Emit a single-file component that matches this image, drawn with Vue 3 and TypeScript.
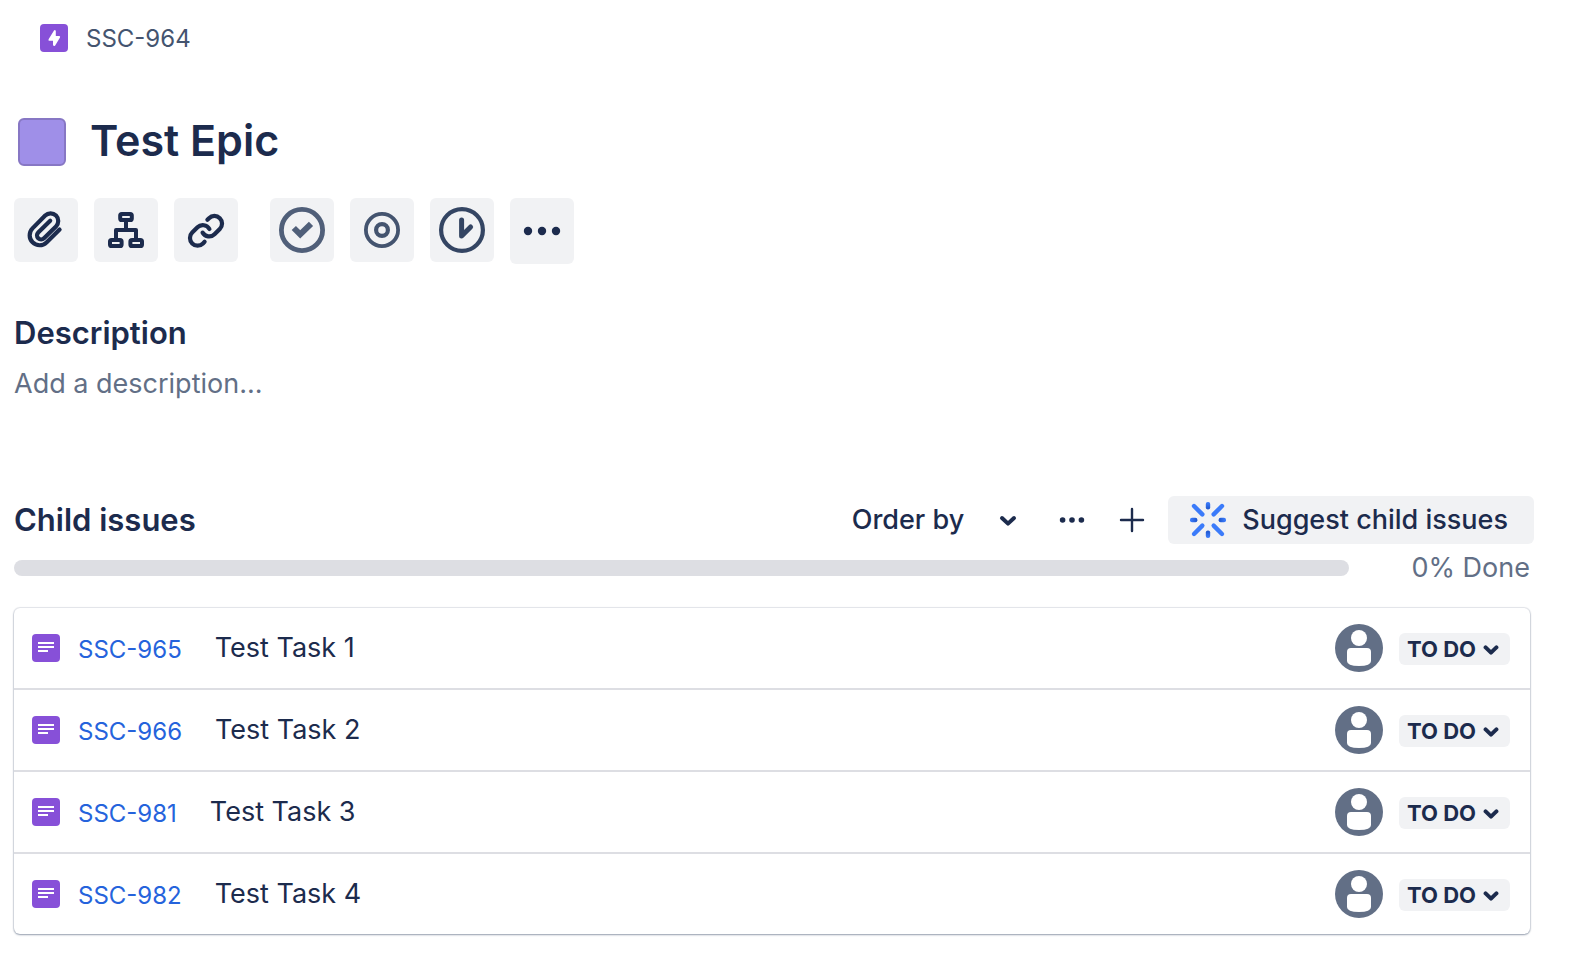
<script setup lang="ts">
interface ChildIssue {
  key: string
  summary: string
}

const issues: ChildIssue[] = [
  { key: 'SSC-965', summary: 'Test Task 1' },
  { key: 'SSC-966', summary: 'Test Task 2' },
  { key: 'SSC-981', summary: 'Test Task 3' },
  { key: 'SSC-982', summary: 'Test Task 4' },
]

const percentDone = 0
const diagonals = [45, 135, 225, 315]
const rays = [0, 90, 180, 270]
</script>

<template>
  <main class="issue">
    <nav class="crumb" aria-label="Breadcrumb">
      <svg class="type-icon" viewBox="0 0 28 28" aria-hidden="true">
        <rect width="28" height="28" rx="4" fill="#8750d8" />
        <path d="M14 6.4 8.6 15.2Q8 16.8 9.4 16.8H13V21Q13.8 22.8 15.2 21.4L20 13.6Q20.6 12 19.2 12H15.8V7Q15.2 5.4 14 6.4Z" fill="#fff" />
      </svg>
      <a class="crumb-key" href="#">SSC-964</a>
    </nav>

    <header class="title-row">
      <button class="swatch" type="button" aria-label="Epic color"></button>
      <h1>Test Epic</h1>
    </header>

    <div class="toolbar">
      <div class="tool-group">
        <button class="tool" type="button" aria-label="Attach">
          <svg viewBox="0 0 64 64" fill="none" stroke="#1c2b4d" stroke-width="4.2" stroke-linecap="round">
            <path d="M45.6 31.6 32.5 44.4A9.9 9.9 0 0 1 18.5 30.4L31.2 17.6A7.6 7.6 0 0 1 42 28.4L30 40.2A4.1 4.1 0 0 1 24.2 34.4L36.2 22.8" />
          </svg>
        </button>
        <button class="tool" type="button" aria-label="Add a child issue">
          <svg viewBox="0 0 64 64" fill="none" stroke="#1c2b4d" stroke-width="4" stroke-linejoin="round">
            <rect x="26.2" y="16" width="11.6" height="6" rx="1.6" />
            <rect x="16" y="42" width="11.6" height="6" rx="1.6" />
            <rect x="36.4" y="42" width="11.6" height="6" rx="1.6" />
            <path d="M32 23V32M22 41V32H42V41" />
          </svg>
        </button>
        <button class="tool" type="button" aria-label="Link issue">
          <svg viewBox="0 0 64 64" fill="none" stroke="#1c2b4d" stroke-width="4.2" stroke-linecap="round">
            <path d="M33.4 21.8 35 20.2A7.6 7.6 0 0 1 45.8 31L40.5 36.3A7.6 7.6 0 0 1 28.6 34.6" />
            <path d="M30.6 43.8 29 45.4A7.6 7.6 0 0 1 18.2 34.6L23.5 29.3A7.6 7.6 0 0 1 35.4 31" />
          </svg>
        </button>
      </div>
      <div class="tool-group">
        <button class="tool" type="button" aria-label="Add checklist">
          <svg viewBox="0 0 64 64" fill="none" stroke="#505f79">
            <circle cx="32" cy="32" r="20.6" stroke-width="4.8" />
            <path d="M23.8 30 30.2 36.4 41 25.8" stroke-width="6" />
          </svg>
        </button>
        <button class="tool" type="button" aria-label="Add goal">
          <svg viewBox="0 0 64 64" fill="none" stroke="#44546f">
            <circle cx="32" cy="32" r="16.1" stroke-width="3.8" />
            <circle cx="32" cy="32" r="5.9" stroke-width="4.2" />
          </svg>
        </button>
        <button class="tool" type="button" aria-label="Log time">
          <svg viewBox="0 0 64 64" fill="none" stroke="#344563">
            <circle cx="32" cy="32" r="20.9" stroke-width="4.2" />
            <path d="M31.6 22V38L40.6 29" stroke-width="5" stroke-linecap="round" stroke-linejoin="round" />
          </svg>
        </button>
        <button class="tool tool-more" type="button" aria-label="More actions">
          <svg viewBox="0 0 64 64" fill="#1c2b4d">
            <circle cx="18" cy="32" r="4.2" />
            <circle cx="32" cy="32" r="4.2" />
            <circle cx="46" cy="32" r="4.2" />
          </svg>
        </button>
      </div>
    </div>

    <section class="description">
      <h2>Description</h2>
      <button class="placeholder" type="button">Add a description...</button>
    </section>

    <section class="children">
      <div class="children-head">
        <h2>Child issues</h2>
        <div class="actions">
          <button class="order" type="button" aria-haspopup="menu">
            <span>Order by</span>
            <svg class="order-chevron" viewBox="0 0 24 24" fill="none" stroke="#1c2b4d" stroke-width="4" stroke-linecap="round" stroke-linejoin="round">
              <path d="M6 10 12 15.6 18 10" />
            </svg>
          </button>
          <button class="plain" type="button" aria-label="More">
            <svg viewBox="0 0 48 48" fill="#1c2b4d">
              <circle cx="14.6" cy="24" r="2.8" />
              <circle cx="24" cy="24" r="2.8" />
              <circle cx="33.4" cy="24" r="2.8" />
            </svg>
          </button>
          <button class="plain" type="button" aria-label="Create child issue">
            <svg viewBox="0 0 48 48" fill="none" stroke="#1c2b4d" stroke-width="2.4" stroke-linecap="round">
              <path d="M24 13V35M13 24H35" />
            </svg>
          </button>
          <button class="suggest" type="button">
            <svg class="spark" viewBox="0 0 36 36" fill="none" stroke-linecap="round" stroke-width="4.4">
              <defs>
                <radialGradient id="ray" gradientUnits="userSpaceOnUse" cx="18" cy="18" r="18">
                  <stop offset="0.6" stop-color="#1d55cc" />
                  <stop offset="1" stop-color="#3f80ff" />
                </radialGradient>
              </defs>
              <path v-for="a in diagonals" :key="a" d="M18 10V-1.8" stroke="#3b7bfa" :transform="`rotate(${a} 18 18)`" />
              <rect v-for="a in rays" :key="a" x="15.8" y="0" width="4.4" height="7.4" rx="2" fill="url(#ray)" :transform="`rotate(${a} 18 18)`" />
            </svg>
            <span>Suggest child issues</span>
          </button>
        </div>
      </div>

      <div class="progress-row">
        <div class="track" role="progressbar" aria-label="Child issues done" :aria-valuenow="percentDone" aria-valuemin="0" aria-valuemax="100">
          <div class="fill" :style="{ width: percentDone + '%' }"></div>
        </div>
        <span class="done">{{ percentDone }}% Done</span>
      </div>

      <ul class="list">
        <li v-for="issue in issues" :key="issue.key" class="row">
          <svg class="type-icon" viewBox="0 0 28 28" aria-hidden="true">
            <rect width="28" height="28" rx="4" fill="#8750d8" />
            <path d="M6 9H22M6 13H22M6 17H16" stroke="#fff" stroke-width="2" />
          </svg>
          <a class="key" href="#">{{ issue.key }}</a>
          <a class="summary" href="#">{{ issue.summary }}</a>
          <button class="assignee" type="button" aria-label="Unassigned">
            <svg viewBox="0 0 48 48">
              <circle cx="24" cy="24" r="24" fill="#626f86" />
              <circle cx="24" cy="14" r="8" fill="#fff" />
              <path d="M16 24H32Q36 24 36 28V37Q36 42 24 42T12 37V28Q12 24 16 24Z" fill="#fff" />
            </svg>
          </button>
          <div class="status">
            <select :aria-label="`Status of ${issue.key}`">
              <option>TO DO</option>
            </select>
            <svg class="status-chevron" viewBox="0 0 16 16" fill="none" stroke="#1c2b4d" stroke-width="4" stroke-linecap="round" stroke-linejoin="round" aria-hidden="true">
              <path d="M2.6 5.4 8 10.6 13.4 5.4" />
            </svg>
          </div>
        </li>
      </ul>
    </section>
  </main>
</template>

<style>
body {
  background: #fff;
}
</style>

<style scoped>
.issue {
  padding: 24px 36px 36px 14px;
  font-family: Inter, "Liberation Sans", sans-serif;
  font-size: 27px;
  line-height: 32px;
  color: #1c2b4d;
}

button,
select {
  margin: 0;
  padding: 0;
  border: 0;
  background: none;
  font: inherit;
  color: inherit;
  cursor: pointer;
}

a {
  text-decoration: none;
  color: inherit;
}

svg {
  display: block;
  flex: none;
}

h1,
h2 {
  margin: 0;
  font-weight: 600;
}

h2 {
  font-size: 31px;
  line-height: 40px;
}

.crumb {
  display: flex;
  align-items: center;
  gap: 18px;
  height: 28px;
  padding-left: 26px;
}

.type-icon {
  width: 28px;
  height: 28px;
}

.crumb-key {
  padding-top: 2px;
  font-size: 24px;
  color: #44546f;
}

.title-row {
  display: flex;
  align-items: flex-end;
  gap: 24px;
  margin-top: 66px;
  padding-left: 4px;
}

.swatch {
  width: 48px;
  height: 48px;
  border: 2px solid #8777c4;
  border-radius: 6px;
  background: #9f8fe8;
}

h1 {
  padding-bottom: 4px;
  font-size: 43px;
  line-height: 44px;
}

.toolbar {
  display: flex;
  align-items: flex-start;
  gap: 32px;
  height: 66px;
  margin-top: 32px;
}

.tool-group {
  display: flex;
  align-items: flex-start;
  gap: 16px;
}

.tool {
  border-radius: 6px;
  background: #f1f2f4;
}

.tool svg {
  width: 64px;
  height: 64px;
}

.tool-more {
  padding: 1px 0;
}

.description {
  margin-top: 49px;
}

.placeholder {
  display: block;
  margin-top: 15px;
  color: #626f86;
}

.children {
  margin-top: 96px;
}

.children-head,
.actions,
.order,
.suggest {
  display: flex;
  align-items: center;
}

.children-head {
  justify-content: space-between;
}

.order,
.suggest {
  height: 48px;
  font-weight: 500;
}

.order {
  gap: 32px;
  margin-right: 28px;
}

.order-chevron {
  width: 24px;
  height: 24px;
}

.plain {
  margin-right: 12px;
}

.plain svg {
  width: 48px;
  height: 48px;
}

.suggest {
  gap: 16px;
  padding: 0 26px 0 22px;
  border-radius: 6px;
  background: #f1f2f4;
}

.spark {
  width: 36px;
  height: 36px;
}

.progress-row {
  display: flex;
  align-items: center;
  justify-content: space-between;
  gap: 62px;
  margin: 8px 4px 0 0;
}

.track {
  flex: 1;
  height: 16px;
  border-radius: 8px;
  background: #dddee3;
  overflow: hidden;
}

.fill {
  height: 100%;
  background: #22a06b;
}

.done {
  color: #626f86;
}

.list {
  margin: 24px 4px 0 0;
  padding: 0;
  list-style: none;
  border-radius: 6px;
  box-shadow: 0 1px 2px rgba(9, 30, 66, 0.36), 0 0 1px 1px rgba(9, 30, 66, 0.1);
}

.row {
  display: flex;
  align-items: center;
  height: 80px;
  padding: 0 20px 0 18px;
}

.row + .row {
  border-top: 2px solid #dddee3;
}

.key {
  margin: 4px 33px 0 18px;
  font-size: 24px;
  color: #2563dc;
}

.summary {
  flex: 1;
}

.assignee {
  margin-right: 16px;
}

.assignee svg {
  width: 48px;
  height: 48px;
}

.status {
  position: relative;
  margin-top: 2px;
}

.status select {
  display: block;
  height: 32px;
  padding: 0 34px 0 8px;
  border-radius: 6px;
  appearance: none;
  background: #f1f2f4;
  font-size: 22px;
  line-height: 32px;
  font-weight: 700;
}

.status-chevron {
  position: absolute;
  top: 9px;
  right: 11px;
  width: 16px;
  height: 16px;
  pointer-events: none;
}
</style>
